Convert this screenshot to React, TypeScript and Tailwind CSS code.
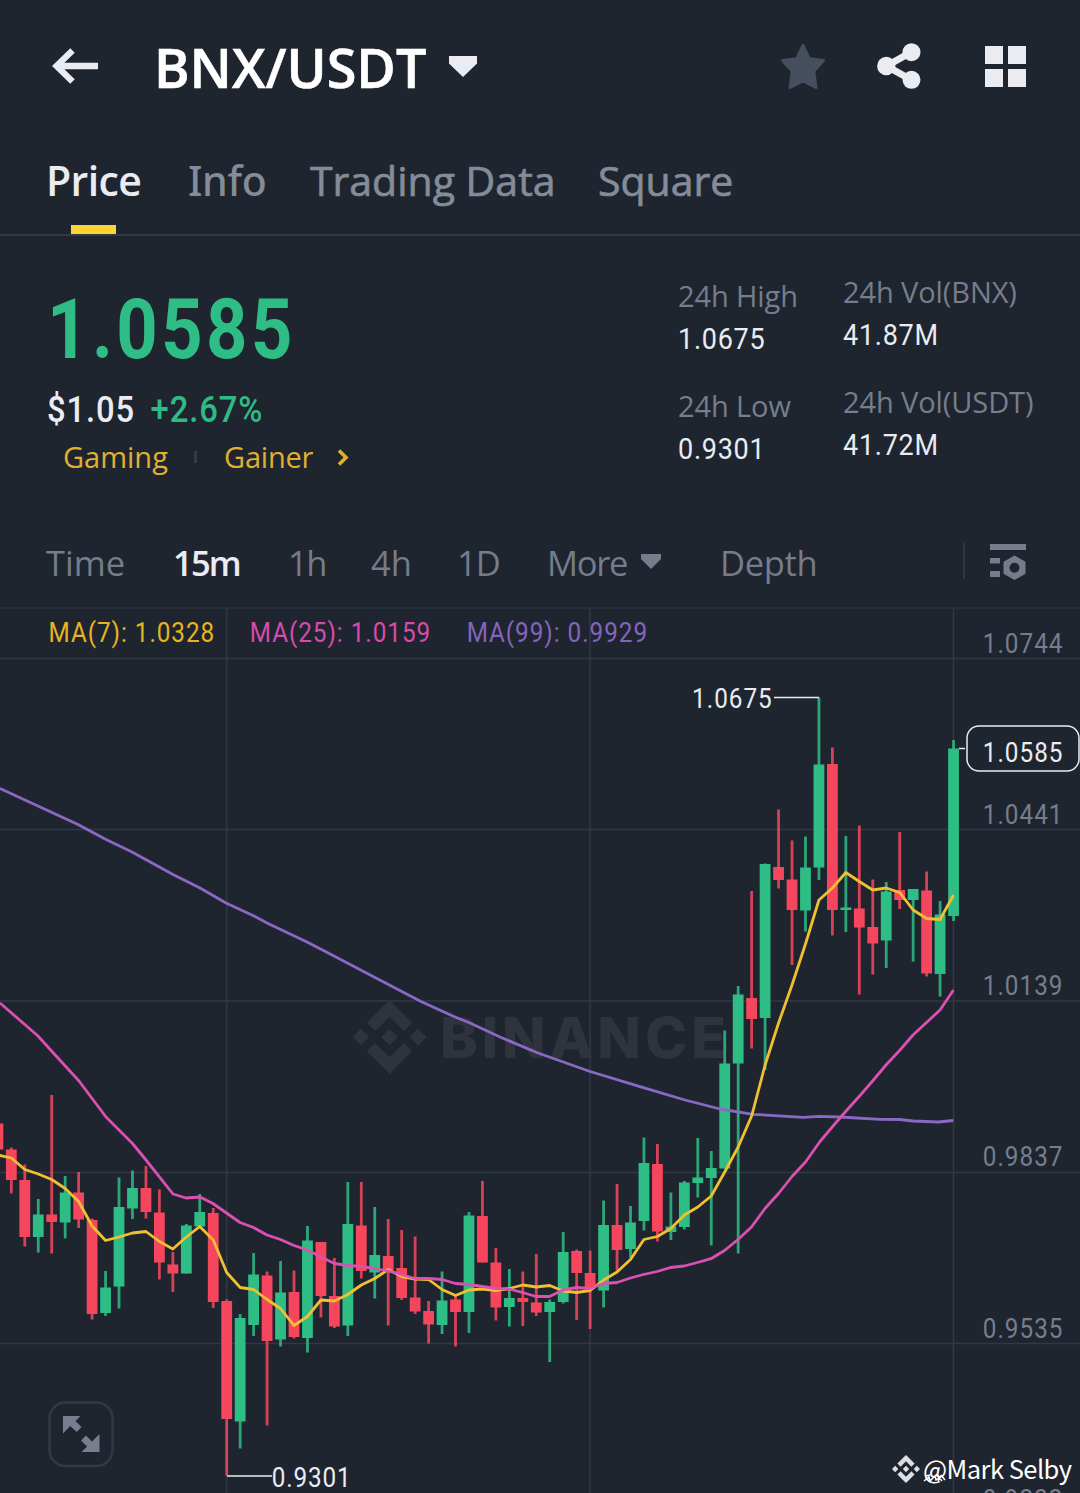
import { SiBinance } from "react-icons/si";

type Candle = [top: number, bottom: number, high: number, low: number, up: 0 | 1];

// body top, body bottom, wick top, wick bottom, rising
const candles: Candle[] = [
  [1123.5, 1149.5, 1123.5, 1149.5, 0],
  [1149.5, 1180, 1147.5, 1193.5, 0],
  [1180, 1237, 1164.5, 1246.5, 0],
  [1214.5, 1237, 1199, 1252.5, 1],
  [1214.5, 1222, 1095, 1253.5, 0],
  [1192.5, 1222.5, 1176, 1238.5, 1],
  [1192.5, 1219.5, 1172, 1228, 0],
  [1220, 1314, 1218.5, 1319.5, 0],
  [1287.5, 1313, 1271, 1316, 1],
  [1207, 1286.5, 1177.5, 1308.5, 1],
  [1188, 1208.5, 1170.5, 1219, 1],
  [1188, 1212, 1166, 1218.5, 0],
  [1212.5, 1262.5, 1189.5, 1279.5, 0],
  [1264.5, 1273.5, 1252, 1292, 0],
  [1225.5, 1273.5, 1224, 1273.5, 1],
  [1212, 1226.5, 1194, 1226.5, 1],
  [1213, 1302, 1208, 1308, 0],
  [1301, 1419, 1299.5, 1475.5, 0],
  [1318, 1421.5, 1314, 1448.5, 1],
  [1274.5, 1325, 1253, 1336, 1],
  [1275.5, 1341, 1271.5, 1425.5, 0],
  [1292.5, 1339.5, 1261, 1346.5, 1],
  [1292, 1337, 1270.5, 1338.5, 0],
  [1240.5, 1338, 1226, 1352.5, 1],
  [1242, 1296, 1242, 1317.5, 0],
  [1296, 1326.5, 1258, 1328, 0],
  [1224, 1325.5, 1182, 1336, 1],
  [1225.5, 1271, 1182, 1278.5, 0],
  [1255, 1272.5, 1207, 1298.5, 1],
  [1256, 1270, 1219, 1325.5, 0],
  [1268, 1298, 1230, 1300, 0],
  [1297.5, 1311.5, 1236.5, 1314, 0],
  [1311, 1324.5, 1301, 1343.5, 0],
  [1300.5, 1325, 1271.5, 1334, 1],
  [1299.5, 1312, 1296, 1346.5, 0],
  [1215.5, 1312, 1212, 1333, 1],
  [1216, 1262.5, 1181, 1262.5, 0],
  [1262.5, 1307.5, 1248, 1320.5, 0],
  [1298, 1307, 1269, 1326.5, 1],
  [1298, 1302, 1271.5, 1326, 0],
  [1302.5, 1312.5, 1254, 1316, 0],
  [1302, 1312, 1299.5, 1362, 1],
  [1252, 1302, 1232, 1303.5, 1],
  [1251, 1273, 1249.5, 1320, 0],
  [1273, 1288.5, 1250.5, 1329, 0],
  [1225, 1290.5, 1200.5, 1307.5, 1],
  [1225, 1250, 1184, 1270.5, 0],
  [1222.5, 1249, 1206, 1257.5, 1],
  [1163, 1221, 1137.5, 1230.5, 1],
  [1164, 1231.5, 1144, 1241.5, 0],
  [1226.5, 1232, 1192.5, 1240, 1],
  [1182.5, 1227, 1181, 1229.5, 1],
  [1177.5, 1183, 1138, 1197.5, 1],
  [1168, 1178, 1151, 1245.5, 1],
  [1063.5, 1168.5, 1030.5, 1168.5, 1],
  [994.5, 1063.5, 986, 1253.5, 1],
  [998, 1019, 891, 1048.5, 0],
  [864, 1018, 863.5, 1070, 1],
  [867, 880, 809.5, 888.5, 0],
  [879.5, 910, 840.5, 965, 0],
  [867.5, 910.5, 836.5, 931.5, 1],
  [764.5, 867.5, 697.5, 880, 1],
  [764, 910, 747.5, 935.5, 0],
  [907.5, 910, 836, 932, 1],
  [908.5, 927.5, 825.5, 994.5, 0],
  [927, 943.5, 879.5, 974.5, 0],
  [891.5, 940.5, 882, 968, 1],
  [890, 900, 832, 909, 0],
  [889, 900, 889, 961.5, 1],
  [890.5, 973.5, 871.5, 976.5, 0],
  [914.5, 974, 901, 996.5, 1],
  [748.5, 916, 740, 921, 1],
];

const ma7 = [
  1155, 1158, 1169.5, 1174, 1179.5, 1188.5, 1201.5, 1226, 1240.5, 1237, 1233, 1231.5, 1241.5, 1249, 1237,
  1226.5, 1240, 1272.5, 1287.5, 1289.5, 1299.5, 1308.5, 1325.5, 1316.5, 1300, 1301, 1294.5, 1285, 1278.5,
  1269.5, 1276.5, 1279, 1279.5, 1289.5, 1295.5, 1290, 1289, 1290.5, 1288.5, 1285, 1287, 1285.5, 1291,
  1292.5, 1290.5, 1280, 1272, 1259.5, 1239.5, 1236.5, 1228.5, 1215, 1207, 1196, 1172, 1147, 1116, 1065,
  1023, 985, 944, 900, 888, 872.5, 881.5, 890, 888, 892.5, 910, 918.5, 919.5, 895,
];

const ma25 =
  "0,1003 38,1036 52,1051.5 79,1081 106,1117 132.5,1143.5 146,1160 173,1194 186,1198 200,1197 213,1203.5 240,1222.5 253.5,1227.5 267,1235 280.5,1239.5 294,1245.5 307.5,1250 321,1257 334.5,1263.5 348,1265.5 361,1266.5 375,1268.5 388,1271 401.5,1274.5 415,1278.5 428.5,1278.5 442,1279.5 455.5,1283.5 469,1284.5 482.5,1286.5 496,1288.5 509,1289 522.5,1292.5 536,1296.5 549.5,1296.5 563,1290 576.5,1287.5 590,1288.5 603.5,1283.5 617,1282.5 630.5,1278 643.5,1274.5 657,1271.5 670.5,1267.5 684,1266 697.5,1262.5 711,1258.7 724.5,1250.5 738,1239.5 751.5,1227 765,1208.5 778.5,1193.5 792,1176.5 805.5,1162 820,1141.5 833.5,1125.5 846.5,1110.5 860,1095.5 873,1080.5 886,1065 900,1050 913,1035 940,1010 953.5,990";

const ma99 =
  "0,788.5 78,824.5 92,832 106,839.5 132,852 173,874.5 200,888 226,903 254,916 267,923 307,942 334,956 375,977.5 421,1001.5 455,1017 470,1023 500,1037 538,1053 590,1071.5 640,1086.7 685,1100 720,1109 753,1114.3 803,1117.3 820,1116.3 840,1117 880,1119.3 900,1119.5 913,1121 938,1122 953.5,1120.5";

const axis = [
  { label: "1.0744", y: 653 },
  { label: "1.0441", y: 824 },
  { label: "1.0139", y: 995 },
  { label: "0.9837", y: 1166 },
  { label: "0.9535", y: 1338 },
  { label: "0.9233", y: 1509 },
];

const candleX = (i: number) => 226.7 + (i - 17) * 13.46;

function Header() {
  return (
    <header className="flex h-[132px] items-center pl-[52px] pr-[54px]">
      <svg width="46" height="36" viewBox="0 0 46 36" fill="none" stroke="#eaecf2" strokeWidth="6.4">
        <path d="M46 18H5M20.500 2.500L4.500 18l16 15.500" />
      </svg>
      <h1 className="ml-[56px] mt-[2px] w-[295px] whitespace-nowrap font-['Open_Sans'] text-[54px] font-semibold leading-none text-white [-webkit-text-stroke:0.6px]">
        BNX/USDT
      </h1>
      <svg width="28" height="21" viewBox="0 0 28 21" fill="#eaecf2">
        <path d="M0 0h28v7.500L14 21 0 7.500z" />
      </svg>
      <svg className="ml-auto" width="46" height="47" viewBox="0 0 46 47" fill="#474f5e" stroke="#474f5e" strokeWidth="3" strokeLinejoin="round">
        <path d="M23 2.500l6.300 13.300L43.500 17.500l-9.800 10.800L36 44.500 23 38 10 44.500l2.300-16.200L2.500 17.500l14.200-1.700z" />
      </svg>
      <svg className="ml-[51px]" width="44" height="46" viewBox="0 0 44 46" fill="#eaecf2" stroke="#eaecf2">
        <path d="M34.500 9L9.500 23l25 14" fill="none" strokeWidth="7" />
        <g stroke="none">
          <circle cx="9.300" cy="23" r="9.200" />
          <circle cx="34.500" cy="9.200" r="9" />
          <circle cx="34.500" cy="36.800" r="9" />
        </g>
      </svg>
      <div className="ml-[64px] grid grid-cols-2 gap-[5px]">
        <span className="size-[18px] bg-[#eaecf2]" />
        <span className="size-[18px] bg-[#eaecf2]" />
        <span className="size-[18px] bg-[#eaecf2]" />
        <span className="size-[18px] bg-[#eaecf2]" />
      </div>
    </header>
  );
}

function Tabs() {
  return (
    <nav className="flex h-[104px] border-b-2 border-[#323844] pl-[46px] pt-[21px] font-['Open_Sans'] text-[41px] leading-[54px] text-[#848b99]">
      <div className="flex w-[142px] flex-col">
        <span className="font-semibold tracking-[-0.6px] text-[#eaecf2]">Price</span>
        <span className="ml-[25px] mt-[18px] h-[9px] w-[45px] bg-[#fcd535]" />
      </div>
      <span className="w-[122px] font-['Noto_Sans'] font-medium tracking-[-0.4px]">Info</span>
      <span className="w-[288px] whitespace-nowrap [-webkit-text-stroke:0.7px]">Trading Data</span>
      <span className="[-webkit-text-stroke:0.7px]">Square</span>
    </nav>
  );
}

function Stat({ label, value }: { label: string; value: string }) {
  return (
    <div className="h-[110px] whitespace-nowrap">
      <div className="font-['Open_Sans'] text-[29px] leading-[42px] tracking-[-0.1px] text-[#767d8b]">{label}</div>
      <div className="mt-px origin-left scale-x-[0.9] font-['Roboto'] text-[30px] leading-[42px] tracking-[0.8px] text-[#eaecf2]">
        {value}
      </div>
    </div>
  );
}

function Summary() {
  return (
    <section className="flex h-[285px]">
      <div className="w-[678px] pl-[47px] pt-[52px] font-['Roboto']">
        <div className="origin-left scale-x-[0.86] text-[84px] font-bold leading-[84px] tracking-[4px] text-[#2ebd85]">
          1.0585
        </div>
        <div className="mt-[17px] flex origin-left scale-x-[0.91] gap-[17px] text-[36px] font-medium leading-[42px] tracking-[1px]">
          <span className="text-[#eaecf2]">$1.05</span>
          <span className="text-[#2fbb86]">+2.67%</span>
        </div>
        <div className="mt-[5px] flex items-center pl-4 font-['Open_Sans'] text-[29px] leading-[42px] text-[#e0b02e]">
          <span className="w-[131px]">Gaming</span>
          <span className="h-3 w-[3px] bg-[#343a46]" />
          <span className="ml-[27px] w-[113px] tracking-[-0.2px]">Gainer</span>
          <svg width="12" height="17" viewBox="0 0 12 17" fill="none" stroke="#e0b02e" strokeWidth="3.600">
            <path d="M2 1.500l7 7-7 7" />
          </svg>
        </div>
      </div>
      <div className="w-[165px] pt-[39px]">
        <Stat label="24h High" value="1.0675" />
        <Stat label="24h Low" value="0.9301" />
      </div>
      <div className="pt-[35px]">
        <Stat label="24h Vol(BNX)" value="41.87M" />
        <Stat label="24h Vol(USDT)" value="41.72M" />
      </div>
    </section>
  );
}

function Intervals() {
  return (
    <div className="flex h-[86px] items-center pb-[3px] pl-[46px] font-['Open_Sans'] text-[34.5px] text-[#757c8a]">
      <span className="w-[127px]">Time</span>
      <span className="w-[115px] font-semibold tracking-[-1.8px] text-[#eaecf2]">15m</span>
      <span className="w-[83px] tracking-[-1.5px]">1h</span>
      <span className="w-[86px]">4h</span>
      <span className="w-[90px] tracking-[-1px]">1D</span>
      <span className="w-[94px] tracking-[-1.3px]">More</span>
      <svg className="mb-[3px]" width="20" height="15" viewBox="0 0 20 15" fill="#757c8a">
        <path d="M0 0h20v5L10 15 0 5z" />
      </svg>
      <span className="ml-[59px] w-[243px] tracking-[-0.3px]">Depth</span>
      <span className="mb-[3px] h-9 w-0.5 bg-[#2f3541]" />
      <svg className="mb-[2px] ml-[25px]" width="37" height="36" viewBox="0 0 37 36" fill="#757c8a">
        <path d="M0 0h36v6H0zM0 14h10v5.500H0zM0 27h10v6H0z" />
        <path
          fillRule="evenodd"
          d="M24.500 11.500l11 6.200v12L24.500 36l-11-6.300v-12zM24.500 18.700a5 5 0 100 10 5 5 0 000-10z"
        />
      </svg>
    </div>
  );
}

function Chart() {
  const ma7Points = ma7.map((y, i) => `${candleX(i)},${y}`).join(" ");
  return (
    <svg className="block" width="1080" height="886" viewBox="0 607 1080 886" fontFamily="Roboto, sans-serif">
      <g stroke="#323843" strokeWidth="1.600">
        <path d="M0 658.500H1080M0 829.500H1080M0 1001H1080M0 1172.500H1080M0 1343.500H1080" />
        <path d="M226.700 607V1493M590 607V1493M953.500 607V1493" />
        <path d="M0 607.500H1080" strokeWidth="3" stroke="#282e39" />
      </g>

      <g fill="#2e333e">
        <SiBinance x="352.500" y="1000" size={74} color="#2e333e" />
        <text x="440" y="1058" fontFamily="Inter, sans-serif" fontSize="57" fontWeight="800" textLength="286">
          BINANCE
        </text>
      </g>

      {/* labels are set slightly condensed, so their x is divided by the scale */}
      <g fontSize="27" transform="scale(0.9 1)">
        <text x="54" y="642" fill="#e6b422" textLength="184">MA(7): 1.0328</text>
        <text x="277.500" y="642" fill="#d94aad" textLength="200.500">MA(25): 1.0159</text>
        <text x="518.500" y="642" fill="#8464bd" textLength="200.500">MA(99): 0.9929</text>
      </g>

      {candles.map(([top, bottom, high, low, up], i) => (
        <g key={i} fill={up ? "#2ebd85" : "#f6465d"}>
          <rect x={candleX(i) - 1.4} y={high} width="2.800" height={low - high} opacity="0.85" />
          <rect x={candleX(i) - 5.4} y={top} width="10.800" height={bottom - top} />
        </g>
      ))}

      <g fill="none" strokeWidth="2.800" strokeLinejoin="round">
        <polyline points={ma99} stroke="#8a68c4" />
        <polyline points={ma7Points} stroke="#efc032" />
        <polyline points={ma25} stroke="#db50b2" />
      </g>

      <g fill="#767d8b" fontSize="27" transform="scale(0.9 1)">
        {axis.map(({ label, y }) => (
          <text key={label} x="1092" y={y} textLength="88.500">{label}</text>
        ))}
      </g>

      <g fill="none" stroke="#eaecf2" strokeWidth="1.500">
        <path d="M774 697.500H819M227 1476H272M959 748.500H965" />
        <rect x="967" y="726" width="112" height="45" rx="12" fill="#1f252f" />
      </g>
      <g fill="#eaecf2" fontSize="27" transform="scale(0.9 1)">
        <text x="769" y="708" textLength="88.500">1.0675</text>
        <text x="1092" y="762" textLength="88.500">1.0585</text>
        <text x="302" y="1487" textLength="87.500">0.9301</text>
      </g>

      <rect x="49.500" y="1402.500" width="63" height="63.500" rx="16" fill="#1f252f" stroke="#323844" strokeWidth="2.600" />
      <g fill="#777e8d">
        <path d="M63 1416h17.500l-5 5 6 6-4.800 5-6.500-6-7.200 7.500z" />
        <path d="M99.500 1452H81.500l5.500-5.500-6-6 5-5 6 6 7.500-7.500z" />
      </g>

      <SiBinance x="892" y="1455" size={28} color="#dcdee2" />
      <text x="923" y="1478.500" fill="#fff" fontFamily="'Noto Sans CJK SC', sans-serif" fontSize="25.500" textLength="149">
        @Mark Selby
      </text>
      <path
        d="M924 1481l5-4 1 4 5-5 1 4 5-4-3 5M926 1476l4-1M936 1474l6 7M941 1475l4 5"
        fill="none"
        stroke="#fff"
        strokeWidth="1.500"
      />
    </svg>
  );
}

export default function App() {
  return (
    <main className="h-[1493px] w-[1080px] overflow-hidden bg-[#1f252f]">
      <Header />
      <Tabs />
      <Summary />
      <Intervals />
      <Chart />
    </main>
  );
}
